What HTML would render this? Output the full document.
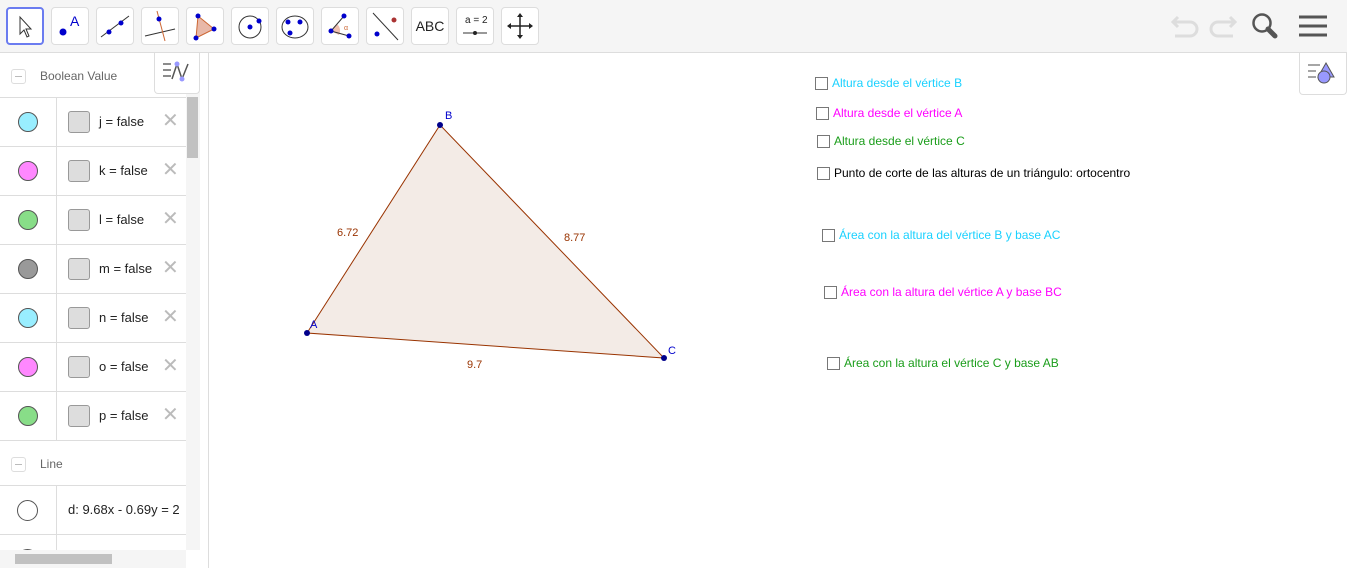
<!DOCTYPE html>
<html><head><style>
body{margin:0;width:1347px;height:568px;overflow:hidden;background:#fff;font-family:"Liberation Sans",sans-serif;position:relative}
.tb{position:absolute;left:0;top:0;width:1347px;height:52px;background:#f5f5f5;border-bottom:1px solid #ddd}
.btn{position:absolute;top:7px;width:38px;height:38px;background:#fff;border:1px solid #ddd;border-radius:4px;box-sizing:border-box}
.sel{border:2px solid #6b7cf0}
.alg{position:absolute;left:0;top:53px;width:208px;height:515px;border-right:1px solid #ddd;overflow:hidden}
.row{position:absolute;left:0;width:186px;height:49px;border-bottom:1px solid #ddd;box-sizing:border-box}
.row .c{position:absolute;left:18px;top:14px;width:18px;height:18px;border-radius:50%;border:1px solid #555}
.row .d{position:absolute;left:56px;top:0;width:1px;height:48px;background:#ddd}
.row .cb{position:absolute;left:68px;top:13px;width:22px;height:22px;border:1px solid #999;border-radius:3px;background:#ddd;box-sizing:border-box}
.row .t{position:absolute;left:99px;top:16px;font-size:13px;color:#222}
.row .x{position:absolute;left:162px;top:10px;font-size:20px;color:#bbb;font-weight:100}
.hd{position:absolute;left:0;width:186px;height:45px;border-bottom:1px solid #ddd;box-sizing:border-box}
.hd .m{position:absolute;left:11px;top:16px;width:13px;height:13px;border:1px solid #ddd;border-radius:3px}
.hd .m:after{content:"";position:absolute;left:3px;top:6px;width:7px;height:1px;background:#bbb}
.hd span{position:absolute;left:40px;top:16px;font-size:12px;color:#666}
.ck{position:absolute;font-size:12px;white-space:nowrap}
.ck:before{content:"";display:inline-block;width:13px;height:13px;border:1px solid #777;vertical-align:-3px;margin-right:4px;box-sizing:border-box}
</style></head><body>
<div class="tb">
<div class="btn sel" style="left:6px"><svg width="34" height="34"><path d="M12 8 L12 25 L16 21 L19 28 L21 27 L18 20 L23 20 Z" fill="#fff" stroke="#333"/></svg></div>
<div class="btn" style="left:51px"><svg width="36" height="36"><circle cx="11" cy="24" r="3.5" fill="#00c"/><text x="18" y="18" fill="#00c" font-size="14" font-family="Liberation Sans">A</text></svg></div>
<div class="btn" style="left:96px"><svg width="36" height="36"><line x1="4" y1="29" x2="32" y2="8" stroke="#333"/><circle cx="12" cy="24" r="2.5" fill="#00c"/><circle cx="24" cy="15" r="2.5" fill="#00c"/></svg></div>
<div class="btn" style="left:141px"><svg width="36" height="36"><line x1="3" y1="28" x2="33" y2="21" stroke="#333"/><line x1="15" y1="3" x2="23" y2="33" stroke="#c63"/><circle cx="17" cy="11" r="2.5" fill="#00c"/></svg></div>
<div class="btn" style="left:186px"><svg width="36" height="36"><polygon points="11,8 27,21 9,30" fill="#e8b8a8" stroke="#c63"/><circle cx="11" cy="8" r="2.5" fill="#00c"/><circle cx="27" cy="21" r="2.5" fill="#00c"/><circle cx="9" cy="30" r="2.5" fill="#00c"/></svg></div>
<div class="btn" style="left:231px"><svg width="36" height="36"><circle cx="18" cy="19" r="11" fill="none" stroke="#333"/><circle cx="18" cy="19" r="2.5" fill="#00c"/><circle cx="27" cy="13" r="2.5" fill="#00c"/></svg></div>
<div class="btn" style="left:276px"><svg width="36" height="36"><ellipse cx="18" cy="19" rx="13" ry="11" fill="none" stroke="#333"/><circle cx="11" cy="14" r="2.5" fill="#00c"/><circle cx="23" cy="14" r="2.5" fill="#00c"/><circle cx="13" cy="25" r="2.5" fill="#00c"/></svg></div>
<div class="btn" style="left:321px"><svg width="36" height="36"><path d="M9 23 L17 27 A9 9 0 0 0 15 16 Z" fill="#f0c0b0"/><line x1="9" y1="23" x2="22" y2="8" stroke="#333"/><line x1="9" y1="23" x2="27" y2="28" stroke="#333"/><circle cx="9" cy="23" r="2.5" fill="#00c"/><circle cx="22" cy="8" r="2.5" fill="#00c"/><circle cx="27" cy="28" r="2.5" fill="#00c"/><text x="22" y="22" fill="#c63" font-size="7">α</text></svg></div>
<div class="btn" style="left:366px"><svg width="36" height="36"><line x1="6" y1="5" x2="31" y2="32" stroke="#333"/><circle cx="27" cy="12" r="2.5" fill="#a33"/><circle cx="10" cy="26" r="2.5" fill="#00c"/></svg></div>
<div class="btn" style="left:411px"><div style="font-size:14px;text-align:center;line-height:36px;color:#222">ABC</div></div>
<div class="btn" style="left:456px"><svg width="36" height="36"><text x="8" y="15" font-size="10" fill="#222">a = 2</text><line x1="6" y1="25" x2="30" y2="25" stroke="#333"/><circle cx="18" cy="25" r="2" fill="#222"/></svg></div>
<div class="btn" style="left:501px"><svg width="36" height="36"><path d="M18 7V29M7 18H29" stroke="#222" stroke-width="1.5"/><path d="M18 5l-3 4h6zM18 31l-3-4h6zM5 18l4-3v6zM31 18l-4-3v6z" fill="#222"/></svg></div>
<svg style="position:absolute;left:1165px;top:10px" width="180" height="34"><path d="M8 12H25A7 7 0 0 1 25 26H10M13 7L8 12L13 17" fill="none" stroke="#ddd" stroke-width="3"/><path d="M70 12H53A7 7 0 0 0 53 26H68M65 7L70 12L65 17" fill="none" stroke="#ddd" stroke-width="3"/><circle cx="97" cy="13" r="8.5" fill="none" stroke="#555" stroke-width="2.5"/><path d="M103 19L110 26" stroke="#555" stroke-width="5" stroke-linecap="round"/><path d="M134 7H162M134 16H162M134 25H162" stroke="#555" stroke-width="3"/></svg>
</div>
<div class="alg">
<div class="hd" style="top:0;width:154px;border:none"><div class="m"></div><span>Boolean Value</span></div>
<div style="position:absolute;left:0;top:44px;width:186px;border-top:1px solid #ddd"></div>
<div class="row" style="top:45px"><div class="c" style="background:#9ef"></div><div class="d"></div><div class="cb"></div><div class="t">j = false</div><div class="x">✕</div></div>
<div class="row" style="top:94px"><div class="c" style="background:#f8f"></div><div class="d"></div><div class="cb"></div><div class="t">k = false</div><div class="x">✕</div></div>
<div class="row" style="top:143px"><div class="c" style="background:#8d8"></div><div class="d"></div><div class="cb"></div><div class="t">l = false</div><div class="x">✕</div></div>
<div class="row" style="top:192px"><div class="c" style="background:#999"></div><div class="d"></div><div class="cb"></div><div class="t">m = false</div><div class="x">✕</div></div>
<div class="row" style="top:241px"><div class="c" style="background:#9ef"></div><div class="d"></div><div class="cb"></div><div class="t">n = false</div><div class="x">✕</div></div>
<div class="row" style="top:290px"><div class="c" style="background:#f8f"></div><div class="d"></div><div class="cb"></div><div class="t">o = false</div><div class="x">✕</div></div>
<div class="row" style="top:339px"><div class="c" style="background:#8d8"></div><div class="d"></div><div class="cb"></div><div class="t">p = false</div><div class="x">✕</div></div>
<div class="hd" style="top:388px"><div class="m"></div><span>Line</span></div>
<div class="row" style="top:433px"><div class="c" style="background:#fff;left:17px;width:19px;height:19px"></div><div class="d"></div><div class="t" style="left:68px;white-space:nowrap;overflow:hidden;width:118px">d: 9.68x - 0.69y = 2</div></div>
<div class="row" style="top:482px;border:none"><div class="c" style="background:#fff;left:17px;width:19px;height:19px"></div><div class="d"></div></div>
<div style="position:absolute;left:186px;top:0;width:14px;height:497px;background:#f5f5f5"></div>
<div style="position:absolute;left:187px;top:44px;width:11px;height:61px;background:#c1c1c1"></div>
<div style="position:absolute;left:0;top:497px;width:186px;height:18px;background:#f5f5f5"></div>
<div style="position:absolute;left:15px;top:501px;width:97px;height:10px;background:#c1c1c1"></div>
<div style="position:absolute;left:154px;top:0;width:46px;height:41px;border:1px solid #ddd;border-top:none;border-radius:0 0 4px 4px;background:#fff;box-sizing:border-box"><svg width="46" height="41"><path d="M8 11H16M8 17H16M8 23H16" stroke="#666" stroke-width="1.5"/><path d="M17 26L22 11L27 26L33 11" fill="none" stroke="#555" stroke-width="1.5"/><circle cx="22" cy="11" r="2.5" fill="#99f"/><circle cx="27" cy="26" r="2.5" fill="#99f"/></svg></div>
</div>
<div style="position:absolute;left:1299px;top:53px;width:46px;height:41px;border:1px solid #ddd;border-top:none;border-radius:0 0 4px 4px"><svg width="46" height="41"><path d="M8 12H20M8 18H16M8 24H16" stroke="#888" stroke-width="1.5"/><polygon points="26,10 34,24 18,24" fill="#99f" stroke="#555"/><circle cx="24" cy="24" r="6" fill="#99f" stroke="#555"/></svg></div>
<svg style="position:absolute;left:0;top:0" width="800" height="568">
<polygon points="307,333 440,125 664,358" fill="#f3ebe6" stroke="#993300" stroke-width="1"/>
<circle cx="307" cy="333" r="3" fill="#00008b"/><circle cx="440" cy="125" r="3" fill="#00008b"/><circle cx="664" cy="358" r="3" fill="#00008b"/>
<g font-family="Liberation Sans" font-size="11"><text x="310" y="328" fill="#00c">A</text><text x="445" y="119" fill="#00c">B</text><text x="668" y="354" fill="#00c">C</text>
<text x="337" y="236" fill="#993300">6.72</text><text x="564" y="241" fill="#993300">8.77</text><text x="467" y="368" fill="#993300">9.7</text></g>
</svg>
<div class="ck" style="left:815px;top:76px;color:#1ad1ff">Altura desde el vértice B</div>
<div class="ck" style="left:816px;top:106px;color:#f0f">Altura desde el vértice A</div>
<div class="ck" style="left:817px;top:134px;color:#1a9d1a">Altura desde el vértice C</div>
<div class="ck" style="left:817px;top:166px;color:#000">Punto de corte de las alturas de un triángulo: ortocentro</div>
<div class="ck" style="left:822px;top:228px;color:#1ad1ff">Área con la altura del vértice B y base AC</div>
<div class="ck" style="left:824px;top:285px;color:#f0f">Área con la altura del vértice A y base BC</div>
<div class="ck" style="left:827px;top:356px;color:#1a9d1a">Área con la altura el vértice C y base AB</div>
</body></html>
